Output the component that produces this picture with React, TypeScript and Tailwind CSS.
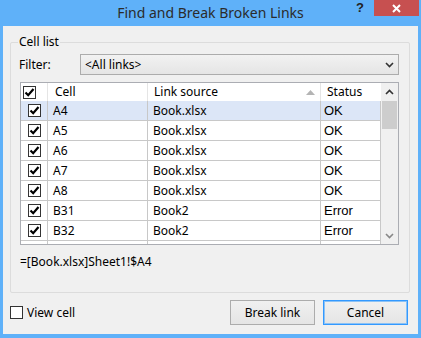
import React from "react";

const rows = [
  { cell: "A4", src: "Book.xlsx", status: "OK" },
  { cell: "A5", src: "Book.xlsx", status: "OK" },
  { cell: "A6", src: "Book.xlsx", status: "OK" },
  { cell: "A7", src: "Book.xlsx", status: "OK" },
  { cell: "A8", src: "Book.xlsx", status: "OK" },
  { cell: "B31", src: "Book2", status: "Error" },
  { cell: "B32", src: "Book2", status: "Error" },
];

function Check({ checked = true }: { checked?: boolean }) {
  return (
    <div className="w-[13px] h-[13px] border border-[#333] bg-white flex items-center justify-center">
      {checked && (
        <svg width="11" height="11" viewBox="0 0 11 11">
          <path d="M1.5 5.5 L4.2 8.2 L9.5 2" fill="none" stroke="#000" strokeWidth="2.2" />
        </svg>
      )}
    </div>
  );
}

function Chevron({ up = false, dark = false }: { up?: boolean; dark?: boolean }) {
  return (
    <svg width="9" height="6" viewBox="0 0 9 6">
      <path
        d={up ? "M1 5 L4.5 1.5 L8 5" : "M1 1 L4.5 4.5 L8 1"}
        fill="none"
        stroke={up || dark ? "#333" : "#888"}
        strokeWidth="1.6"
      />
    </svg>
  );
}

export default function App() {
  return (
    <div className="w-[421px] h-[338px] bg-[#5fb1f9] flex flex-col font-['Noto_Sans',sans-serif] text-[12px] text-black">
      {/* Title bar */}
      <div className="relative h-[26px] flex items-center justify-center">
        <span className="text-[14px] text-[#2b2b2b] -mt-[2px]">Find and Break Broken Links</span>
        <div className="absolute top-0 right-[2px] flex items-start">
          <span className="font-['Liberation_Sans',sans-serif] font-bold text-[13px] text-[#222] leading-[16px] mr-[10px]">?</span>
          <div className="w-[45px] h-[16px] bg-[#c75050] flex items-center justify-center">
            <svg width="9" height="9" viewBox="0 0 9 9">
              <path d="M1 1 L8 8 M8 1 L1 8" stroke="#fff" strokeWidth="2" />
            </svg>
          </div>
        </div>
      </div>

      {/* Client area */}
      <div className="flex-1 mx-[3px] mb-[4px] bg-[#f0f0f0] flex flex-col pl-[7px] pt-[16px]">
        {/* Group box */}
        <div className="relative w-[400px] h-[251px] border border-[#dcdcdc] rounded-[2px] pl-[9px] pt-[11px]">
          <span className="absolute -top-[10px] left-[7px] px-[1px] bg-[#f0f0f0] leading-[18px]">Cell list</span>

          <div className="flex items-center h-[21px]">
            <span className="w-[61px] -ml-[1px]">Filter:</span>
            <div className="w-[319px] h-[21px] border border-[#acacac] bg-gradient-to-b from-[#f2f2f2] to-[#e5e5e5] flex items-center justify-between pl-[4px] pr-[4px]">
              <span>&lt;All links&gt;</span>
              <Chevron dark />
            </div>
          </div>

          {/* Table */}
          <div className="mt-[7px] w-[379px] h-[163px] border border-[#abadb3] bg-white flex overflow-hidden">
            <div className="w-[360px] flex flex-col">
              <div className="h-[18px] flex shrink-0">
                <div className="w-[27px] border-r border-[#e5e5e5] flex items-center pl-[2px]">
                  <Check />
                </div>
                <div className="w-[100px] border-r border-[#e5e5e5] pl-[7px] flex items-center">Cell</div>
                <div className="w-[173px] border-r border-[#e5e5e5] pl-[6px] pr-[5px] flex items-center justify-between">
                  <span>Link source</span>
                  <svg width="9" height="5" viewBox="0 0 9 5">
                    <path d="M0 5 L4.5 0 L9 5 Z" fill="#b4b4b4" />
                  </svg>
                </div>
                <div className="w-[60px] pl-[6px] flex items-center">Status</div>
              </div>
              {rows.map((r, i) => (
                <div
                  key={r.cell}
                  className={`h-[20px] flex shrink-0 border-b border-[#c8c8c8] ${i === 0 ? "bg-[#dce6f7]" : ""}`}
                >
                  <div className="w-[27px] border-r border-[#c8c8c8] flex items-center pl-[7px]">
                    <Check />
                  </div>
                  <div className="w-[100px] border-r border-[#c8c8c8] pl-[5px] flex items-center">{r.cell}</div>
                  <div className="w-[173px] border-r border-[#c8c8c8] pl-[5px] flex items-center">{r.src}</div>
                  <div className="w-[60px] border-r border-[#c8c8c8] pl-[3px] flex items-center font-['Liberation_Sans',sans-serif] text-[13px]">
                    {r.status}
                  </div>
                </div>
              ))}
              {/* partially visible next row */}
              <div className="h-[20px] flex shrink-0">
                <div className="w-[27px] border-r border-[#c8c8c8]" />
                <div className="w-[100px] border-r border-[#c8c8c8]" />
                <div className="w-[173px] border-r border-[#c8c8c8]" />
                <div className="w-[60px] border-r border-[#c8c8c8]" />
              </div>
            </div>
            {/* Scrollbar */}
            <div className="w-[17px] bg-[#f0f0f0] flex flex-col items-center">
              <div className="h-[18px] flex items-center justify-center">
                <Chevron up />
              </div>
              <div className="w-[15px] h-[28px] bg-[#cdcdcd]" />
              <div className="flex-1" />
              <div className="h-[16px] flex items-center justify-center">
                <Chevron />
              </div>
            </div>
          </div>

          <div className="mt-[9px] leading-[16px]">=[Book.xlsx]Sheet1!$A4</div>
        </div>

        {/* Bottom row */}
        <div className="mt-[7px] flex items-center h-[25px] pr-[10px]">
          <div className="flex items-center gap-[4px]">
            <div className="w-[13px] h-[13px] border border-[#333] bg-white" />
            <span>View cell</span>
          </div>
          <div className="ml-auto flex gap-[8px]">
            <div className="w-[85px] h-[25px] border border-[#acacac] bg-gradient-to-b from-[#f0f0f0] to-[#e5e5e5] flex items-center justify-center">
              Break link
            </div>
            <div className="w-[85px] h-[25px] border border-[#3399ff] shadow-[inset_0_0_0_1px_#8cc2f5] bg-gradient-to-b from-[#f0f0f0] to-[#e5e5e5] flex items-center justify-center">
              Cancel
            </div>
          </div>
        </div>
      </div>
    </div>
  );
}
